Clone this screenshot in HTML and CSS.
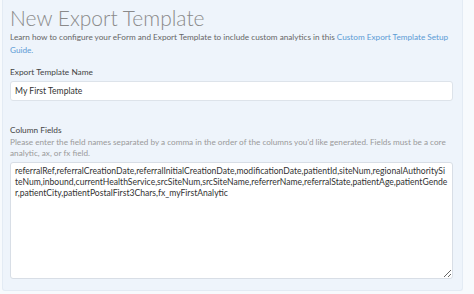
FILE: index.html
```html
<!DOCTYPE html>
<html lang="en">
<head>
    <meta charset="UTF-8">
    <meta name="viewport" content="width=device-width, initial-scale=1.0">
    <title>New Export Template</title>
    <link rel="stylesheet" href="styles.css">
</head>
<body>
    <div class="panel">
        <h1 class="page-title">New Export Template</h1>
        <p class="intro">Learn how to configure your eForm and Export Template to include custom analytics in this <a href="#">Custom Export Template Setup Guide.</a></p>

        <div class="field">
            <label for="templateName">Export Template Name</label>
            <input type="text" id="templateName" value="My First Template">
        </div>

        <div class="field field-columns">
            <label for="columnFields">Column Fields</label>
            <p class="help">Please enter the field names separated by a comma in the order of the columns you'd like generated. Fields must be a core analytic, ax, or fx field.</p>
            <textarea id="columnFields">referralRef,referralCreationDate,referralInitialCreationDate,modificationDate,patientId,siteNum,regionalAuthoritySiteNum,inbound,currentHealthService,srcSiteNum,srcSiteName,referrerName,referralState,patientAge,patientGender,patientCity,patientPostalFirst3Chars,fx_myFirstAnalytic</textarea>
        </div>
    </div>
</body>
</html>
```

FILE: styles.css
```css
body {
    font-family: Lato, "Open Sans", sans-serif;
    margin: 0;
    background-color: #f7fafd;
    color: #333;
}

.panel {
    width: 443px;
    margin: 0 0 2px 2px;
    padding: 0 9px 11px 7px;
    background-color: #eef4fb;
    border: 1px solid #e3ebf4;
    border-top: none;
    border-radius: 0 0 3px 3px;
}

.page-title {
    margin: 0;
    padding-top: 5px;
    font-size: 21px;
    font-weight: 300;
    color: #8a8a8a;
    line-height: 26px;
}

.intro {
    margin: 0 -2px 0 0;
    font-size: 8.2px;
    line-height: 12.5px;
    color: #666;
}

.intro a {
    color: #5b9bd5;
    text-decoration: none;
}

.field {
    margin-top: 10px;
}

.field label {
    display: block;
    font-size: 8.3px;
    line-height: 12px;
    color: #444;
    margin-bottom: 3px;
}

.field input {
    display: block;
    box-sizing: border-box;
    width: 100%;
    height: 20px;
    margin: 0;
    padding: 0 4px;
    border: 1px solid #dde3ea;
    border-radius: 3px;
    background: #fff;
    font-family: inherit;
    font-size: 8.6px;
    color: #333;
}

.field-columns {
    margin-top: 23px;
}

.field-columns label {
    margin-bottom: 1px;
}

.help {
    margin: 0 0 4px;
    font-size: 8.2px;
    line-height: 10.5px;
    color: #9a9a9a;
}

.field textarea {
    display: block;
    box-sizing: border-box;
    width: 100%;
    height: 117px;
    margin: 0;
    padding: 3px 4px;
    border: 1px solid #d8dee6;
    border-radius: 3px;
    background: #fff;
    font-family: inherit;
    font-size: 8.59px;
    line-height: 11px;
    color: #333;
    resize: vertical;
}
```
